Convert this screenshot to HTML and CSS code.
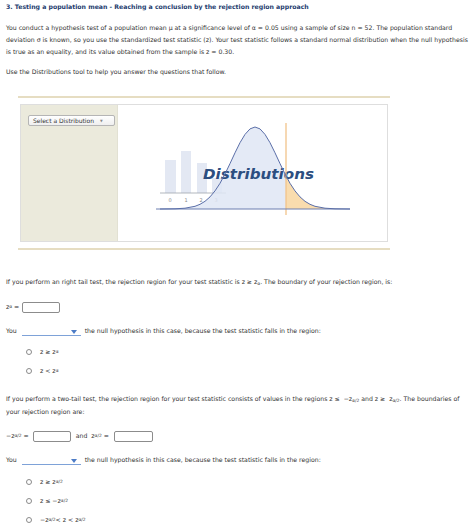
FILE: index.html
```html
<!DOCTYPE html>
<html>
<head>
<meta charset="utf-8">
<link rel="stylesheet" href="styles.css">
</head>
<body>
<div class="title">3. Testing a population mean - Reaching a conclusion by the rejection region approach</div>
<p class="para intro">You conduct a hypothesis test of a population mean μ at a significance level of α = 0.05 using a sample of size n = 52. The population standard<br>deviation σ is known, so you use the standardized test statistic (z). Your test statistic follows a standard normal distribution when the null hypothesis<br>is true as an equality, and its value obtained from the sample is z = 0.30.</p>
<p class="para use">Use the Distributions tool to help you answer the questions that follow.</p>

<div class="widget">
  <div class="rule"></div>
  <div class="box">
    <div class="side">
      <div class="selbtn">Select a Distribution <span class="selarrow">▼</span></div>
    </div>
    <div class="canvas">
      <svg width="269" height="136" viewBox="1 1 269 136">
        <rect x="48" y="56" width="11" height="33" fill="#e3e8f3"/>
        <rect x="64" y="47" width="10" height="42" fill="#e3e8f3"/>
        <rect x="80" y="59" width="10" height="30" fill="#e3e8f3"/>
        <rect x="95" y="74" width="10" height="15" fill="#e3e8f3"/>
        <line x1="43" y1="89" x2="109" y2="89" stroke="#a0a4ac" stroke-width="0.8"/>
        <text x="53" y="98" class="tick">0</text>
        <text x="69" y="98" class="tick">1</text>
        <text x="84" y="98" class="tick">2</text>
        <text x="99" y="98" class="tick">3</text>
        <polygon fill="#dfe6f4" fill-opacity="0.85" points="43,105 58,104.8 68,104.2 78,102.3 83,100.3 88,97.3 93,92.9 98,86.9 103,79.3 108,70 113,59.6 118,48.8 123,38.7 128,30.4 133,24.9 138,23 143,24.9 148,30.4 153,38.7 158,48.8 163,59.6 168,70 169,72 169,105"/>
        <polygon fill="#f9dcae" points="169,72 173,79.3 178,86.9 183,92.9 188,97.3 193,100.3 198,102.3 208,104.2 218,104.8 225,105 169,105"/>
        <text x="86" y="75" class="brand" textLength="111" lengthAdjust="spacingAndGlyphs">Distributions</text>
        <line x1="169" y1="19" x2="169" y2="111" stroke="#f2c38a" stroke-width="1.3"/>
        <line x1="39" y1="105" x2="233" y2="105" stroke="#6d7fb0" stroke-width="1"/>
        <polyline fill="none" stroke="#5a6ea8" stroke-width="1" stroke-linejoin="round" points="43,105 58,104.8 68,104.2 78,102.3 83,100.3 88,97.3 93,92.9 98,86.9 103,79.3 108,70 113,59.6 118,48.8 123,38.7 128,30.4 133,24.9 138,23 143,24.9 148,30.4 153,38.7 158,48.8 163,59.6 168,70 173,79.3 178,86.9 183,92.9 188,97.3 193,100.3 198,102.3 208,104.2 218,104.8 233,105"/>
      </svg>
    </div>
  </div>
  <div class="rule bottom"></div>
</div>

<p class="para tail1">If you perform an right tail test, the rejection region for your test statistic is z ≥ z<sub>α</sub>. The boundary of your rejection region, is:</p>
<div class="row zrow">z<sub>α</sub>&nbsp;= <span class="inbox"></span></div>
<div class="row yourow">You <span class="dd"><span class="ddarrow"></span></span> the null hypothesis in this case, because the test statistic falls in the region:</div>
<div class="radios r1">
  <div class="opt"><span class="radio"></span>z ≥ z<sub>α</sub></div>
  <div class="opt"><span class="radio"></span>z &lt; z<sub>α</sub></div>
</div>

<p class="para tail2">If you perform a two-tail test, the rejection region for your test statistic consists of values in the regions z ≤ &nbsp;−z<sub>α/2</sub> and z ≥ &nbsp;z<sub>α/2</sub>. The boundaries of<br>your rejection region are:</p>
<div class="row zrow2">−z<sub>α/2</sub>&nbsp;= <span class="inbox b2"></span> and &nbsp;z<sub>α/2</sub>&nbsp;= <span class="inbox b3"></span></div>
<div class="row yourow">You <span class="dd"><span class="ddarrow"></span></span> the null hypothesis in this case, because the test statistic falls in the region:</div>
<div class="radios r2">
  <div class="opt"><span class="radio"></span>z ≥ z<sub>α/2</sub></div>
  <div class="opt"><span class="radio"></span>z ≤ −z<sub>α/2</sub></div>
  <div class="opt"><span class="radio"></span>−z<sub>α/2</sub> &lt; z &lt; z<sub>α/2</sub></div>
</div>
</body>
</html>
```
FILE: styles.css
```css
html, body {
  margin: 0;
  background: #ffffff;
}
body {
  padding: 1px 0 0 6px;
  font-family: "DejaVu Sans", Verdana, sans-serif;
  font-size: 6.2px;
  line-height: 12px;
  color: #333333;
  white-space: nowrap;
}
sub {
  font-size: 4.4px;
  line-height: 0;
  vertical-align: -1px;
}
.title {
  font-weight: bold;
  color: #1d3c6e;
  height: 12px;
}
.para {
  margin: 0;
}
.intro { margin-top: 9px; }
.use { margin-top: 8px; }
.widget {
  margin: 18px 0 0 12px;
  width: 372px;
}
.rule {
  height: 2px;
  background: #e6ddc2;
}
.rule.bottom { margin-top: 6px; }
.box {
  margin: 6px 2px 0 2px;
  height: 136px;
  border: 1px solid #dedede;
  display: flex;
}
.side {
  width: 98px;
  background: #ebeadc;
  border-right: 1px solid #e2e1d3;
  box-sizing: border-box;
  padding: 10px 0 0 7px;
}
.selbtn {
  width: 87px;
  height: 11px;
  box-sizing: border-box;
  border: 1px solid #b5b5b5;
  border-radius: 2px;
  background: linear-gradient(#ffffff, #efefef);
  font-size: 6px;
  line-height: 9px;
  padding-left: 4px;
  color: #333;
}
.selarrow {
  font-size: 3.5px;
  color: #888;
  margin-left: 4px;
  vertical-align: 1px;
}
.canvas {
  flex: 1;
  background: #fff;
}
.canvas svg { display: block; }
.tick {
  font-size: 5px;
  fill: #8a8a8a;
  text-anchor: middle;
  font-family: "DejaVu Sans", sans-serif;
}
.brand {
  font-family: "DejaVu Sans", Verdana, sans-serif;
  font-weight: bold;
  font-style: italic;
  font-size: 14px;
  fill: #2c4e80;
}
.tail1 { margin-top: 26px; }
.row {
  height: 12px;
  display: flex;
  align-items: center;
}
.zrow { margin-top: 13px; }
.inbox {
  display: inline-block;
  width: 38px;
  height: 11px;
  box-sizing: border-box;
  border: 1px solid #8c8c8c;
  border-radius: 2px;
  background: #fff;
  margin-left: 3px;
}
.yourow { margin-top: 12px; }
.dd {
  display: inline-block;
  position: relative;
  width: 59px;
  height: 9px;
  border-bottom: 1px solid #7ea2d8;
  margin: 0 4px 0 5px;
  box-sizing: border-box;
}
.ddarrow {
  position: absolute;
  right: 4px;
  top: 3px;
  width: 0;
  height: 0;
  border-left: 3px solid transparent;
  border-right: 3px solid transparent;
  border-top: 4px solid #4d7cc6;
}
.radios { margin-left: 20px; }
.r1 { margin-top: 9px; }
.r2 { margin-top: 10px; }
.opt {
  height: 12px;
  display: flex;
  align-items: center;
  margin-bottom: 7px;
}
.radio {
  display: inline-block;
  width: 6px;
  height: 6px;
  box-sizing: border-box;
  border: 1px solid #8a8a8a;
  border-radius: 50%;
  background: #fff;
  margin-right: 8px;
}
.tail2 {
  margin-top: 15px;
  line-height: 13px;
}
.zrow2 { margin-top: 12px; }
.b2 { width: 38px; margin-left: 4px; margin-right: 5px; }
.b3 { width: 39px; margin-left: 5px; }
```
